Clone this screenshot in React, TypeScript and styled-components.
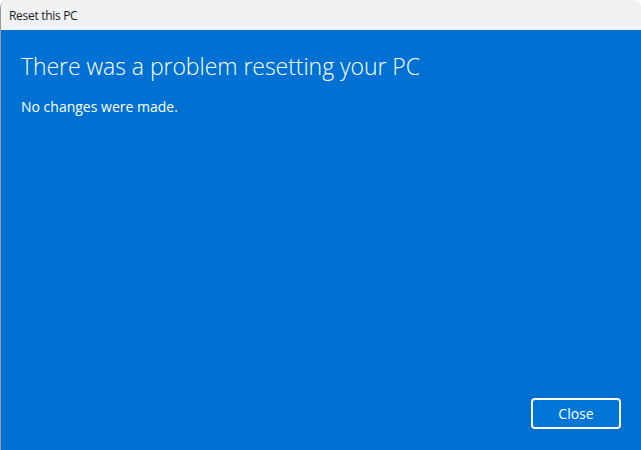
import { createGlobalStyle, styled } from "styled-components"

const Global = createGlobalStyle`
    html, body {
        margin: 0;
        padding: 0;
        background: #ffffff;
    }
    body {
        font-family: "Segoe UI", "Open Sans", "Noto Sans", sans-serif;
    }
`

const Window = styled.div`
    width: 641px;
    height: 450px;
    display: flex;
    flex-direction: column;
    box-sizing: border-box;
    border-left: 1px solid #9a9a9a;
    border-top-left-radius: 8px;
    border-top-right-radius: 8px;
    overflow: hidden;
`

const TitleBar = styled.div`
    height: 30px;
    flex-shrink: 0;
    display: flex;
    align-items: center;
    padding-left: 8px;
    background: #eff1f3;
    color: #1b1b1b;
    font-size: 12px;
    letter-spacing: -0.3px;
`

const Panel = styled.div`
    flex: 1;
    display: flex;
    flex-direction: column;
    background: #0070d3;
    color: #ffffff;
    padding: 19px 20px 21px 20px;
`

const Heading = styled.h1`
    margin: 0;
    font-size: 23px;
    font-weight: 300;
    line-height: 34px;
    letter-spacing: -0.05px;
`

const Message = styled.p`
    margin: 14px 0 0;
    font-size: 14px;
    line-height: 20px;
`

const Footer = styled.div`
    margin-top: auto;
    display: flex;
    justify-content: flex-end;
`

const Button = styled.button`
    width: 90px;
    height: 31px;
    background: #0077d6;
    border: 2px solid #ffffff;
    border-radius: 4px;
    color: #ffffff;
    font-family: inherit;
    font-size: 14px;
    padding: 0;
`

export default () => <>
    <Global />
    <Window>
        <TitleBar>Reset this PC</TitleBar>
        <Panel>
            <Heading>There was a problem resetting your PC</Heading>
            <Message>No changes were made.</Message>
            <Footer>
                <Button>Close</Button>
            </Footer>
        </Panel>
    </Window>
</>
